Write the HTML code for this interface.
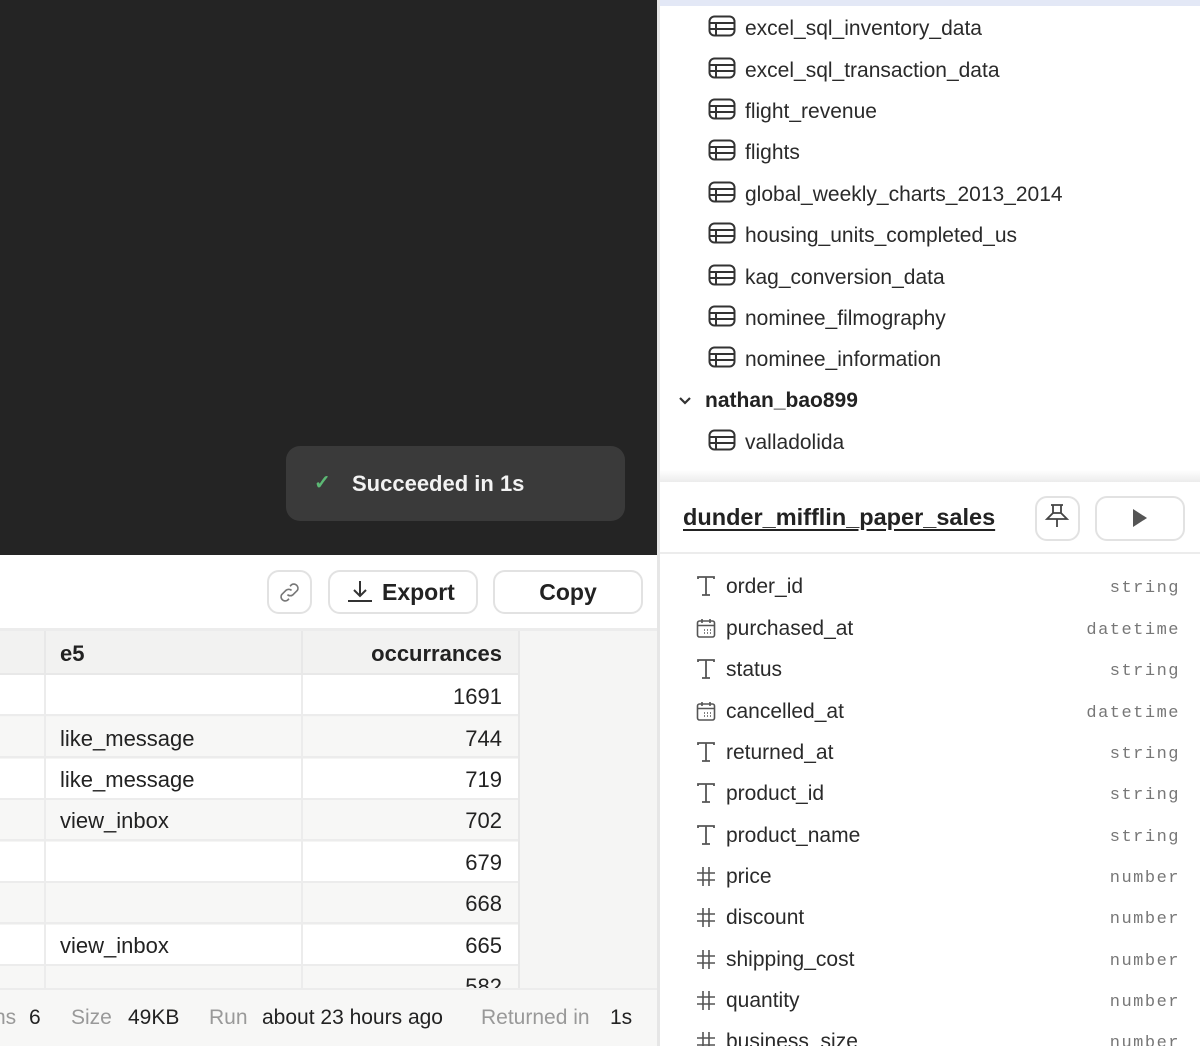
<!DOCTYPE html>
<html><head><meta charset="utf-8"><style>
*{margin:0;padding:0;box-sizing:border-box}
html,body{width:1200px;height:1046px;overflow:hidden}
body{position:relative;background:#fff;font-family:"Liberation Sans",sans-serif;color:#222}
.a{position:absolute}
.dark{left:0;top:0;width:657px;height:555px;background:#242424}
.toast{left:286px;top:446px;width:339px;height:75px;background:#3a3a3a;border-radius:14px;color:#f2f2f2;font-size:22px;font-weight:bold;line-height:75px;padding-left:66px}
.toast .ck{position:absolute;left:28px;top:0;color:#5cb874;font-size:20px}
.vdiv{left:657px;top:0;width:3px;height:1046px;background:#e6e6e6}
.tr{left:708px;height:24px;font-size:21px;line-height:24px;color:#2a2a2a;white-space:nowrap}
.tr svg{position:absolute;left:0;top:0}
.tr span{position:absolute;left:37px;top:2px}
.col{left:694px;font-size:21px;line-height:24px;color:#2a2a2a;width:486px;height:24px}
.col .nm{position:absolute;left:32px;top:1px}
.col .ty{position:absolute;right:0;top:3px;font-family:"Liberation Mono",monospace;font-size:17px;color:#777;letter-spacing:1.5px}
.col svg{position:absolute;left:2px;top:1px}
.btn{border:2px solid #e2e2e2;border-radius:12px;background:#fff}
.cell{position:absolute;font-size:22px;line-height:41px;color:#222}
</style></head><body>
<div class="a dark"></div>
<div class="a toast"><span class="ck">✓</span>Succeeded in 1s</div>

<div class="a" style="left:660px;top:0;width:540px;height:6px;background:#e3e8f6"></div>
<div class="a" style="left:660px;top:470px;width:540px;height:12px;background:linear-gradient(#fff,#ececec)"></div>

<div class="a vdiv"></div>

<div class="a" style="left:683px;top:504px;font-size:23.5px;font-weight:bold;color:#222;text-decoration:underline;text-underline-offset:4px">dunder_mifflin_paper_sales</div>
<div class="a btn" style="left:1035px;top:496px;width:45px;height:45px"></div>
<svg class="a" style="left:1044px;top:503px" width="26" height="30" viewBox="0 0 26 30" fill="none" stroke="#444" stroke-width="1.8"><path d="M7 2h12M9 2v8M17 2v8M3 16l6-6h8l6 6zM3 16h20M13 16v8"/></svg>
<div class="a btn" style="left:1095px;top:496px;width:90px;height:45px"></div>
<svg class="a" style="left:1131px;top:508px" width="18" height="20"><path d="M2 1L16 10L2 19Z" fill="#555"/></svg>
<div class="a" style="left:660px;top:552px;width:540px;height:2px;background:#ececec"></div>

<div class="a btn" style="left:267px;top:570px;width:45px;height:44px"></div>
<svg class="a" style="left:277px;top:580px" width="25" height="25" viewBox="0 0 24 24" fill="none" stroke="#777" stroke-width="1.6"><path d="M10 14a4 4 0 0 0 5.5 0l4-4a4 4 0 0 0-5.5-5.5l-1.5 1.5"/><path d="M14 10a4 4 0 0 0-5.5 0l-4 4a4 4 0 0 0 5.5 5.5l1.5-1.5"/></svg>
<div class="a btn" style="left:328px;top:570px;width:150px;height:44px"></div>
<svg class="a" style="left:347px;top:579px" width="26" height="24" fill="none" stroke="#333" stroke-width="2"><path d="M13 2v15M7 11l6 6 6-6M1 22h24"/></svg>
<div class="a" style="left:382px;top:579px;font-size:23px;font-weight:bold;color:#222">Export</div>
<div class="a btn" style="left:493px;top:570px;width:150px;height:44px"></div>
<div class="a" style="left:493px;top:579px;width:150px;text-align:center;font-size:23px;font-weight:bold;color:#222">Copy</div>

<div class="a" style="left:0;top:628px;width:657px;height:360px;background:#f5f5f4;overflow:hidden">
 <div class="a" style="left:0;top:0;width:657px;height:3px;background:#ececec"></div>
 <div class="a" style="left:0;top:3px;width:518px;height:44px;background:#f2f2f1;border-bottom:2px solid #e8e8e8"></div>
 <div class="a" style="left:44px;top:3px;width:2px;height:360px;background:#e8e8e8"></div>
 <div class="a" style="left:301px;top:3px;width:2px;height:360px;background:#e8e8e8"></div>
 <div class="a" style="left:518px;top:3px;width:2px;height:360px;background:#e8e8e8"></div>
 <div class="cell" style="left:60px;top:5px;font-weight:bold;font-size:22px">e5</div>
 <div class="cell" style="left:303px;top:5px;width:199px;text-align:right;font-weight:bold">occurrances</div>
 <div class="a" style="left:0;top:47px;width:518px;height:41px;background:#fff;border-bottom:2px solid #ececec"></div>
 <div class="a" style="left:0;top:89px;width:518px;height:41px;background:#f7f7f6;border-bottom:2px solid #ececec"></div>
 <div class="a" style="left:0;top:131px;width:518px;height:41px;background:#fff;border-bottom:2px solid #ececec"></div>
 <div class="a" style="left:0;top:172px;width:518px;height:41px;background:#f7f7f6;border-bottom:2px solid #ececec"></div>
 <div class="a" style="left:0;top:214px;width:518px;height:41px;background:#fff;border-bottom:2px solid #ececec"></div>
 <div class="a" style="left:0;top:255px;width:518px;height:41px;background:#f7f7f6;border-bottom:2px solid #ececec"></div>
 <div class="a" style="left:0;top:297px;width:518px;height:41px;background:#fff;border-bottom:2px solid #ececec"></div>
 <div class="a" style="left:0;top:338px;width:518px;height:41px;background:#f7f7f6"></div>
 <div class="a" style="left:44px;top:47px;width:2px;height:320px;background:#ececec"></div>
 <div class="a" style="left:301px;top:47px;width:2px;height:320px;background:#ececec"></div>
 <div class="cell" style="left:303px;top:48px;width:199px;text-align:right">1691</div>
 <div class="cell" style="left:60px;top:90px">like_message</div><div class="cell" style="left:303px;top:90px;width:199px;text-align:right">744</div>
 <div class="cell" style="left:60px;top:131px">like_message</div><div class="cell" style="left:303px;top:131px;width:199px;text-align:right">719</div>
 <div class="cell" style="left:60px;top:172px">view_inbox</div><div class="cell" style="left:303px;top:172px;width:199px;text-align:right">702</div>
 <div class="cell" style="left:303px;top:214px;width:199px;text-align:right">679</div>
 <div class="cell" style="left:303px;top:255px;width:199px;text-align:right">668</div>
 <div class="cell" style="left:60px;top:297px">view_inbox</div><div class="cell" style="left:303px;top:297px;width:199px;text-align:right">665</div>
 <div class="cell" style="left:303px;top:338px;width:199px;text-align:right">582</div>
</div>
<div class="a" style="left:0;top:988px;width:657px;height:58px;background:#f7f7f6;border-top:2px solid #ececec;font-size:21px;line-height:56px;white-space:nowrap">
 <span class="a" style="left:-6px;color:#999">ns</span><span class="a" style="left:29px">6</span>
 <span class="a" style="left:71px;color:#999">Size</span><span class="a" style="left:128px">49KB</span>
 <span class="a" style="left:209px;color:#999">Run</span><span class="a" style="left:262px">about 23 hours ago</span>
 <span class="a" style="left:481px;color:#999">Returned in</span><span class="a" style="left:610px">1s</span>
</div>

<div class="a tr" style="top:15px"><svg width="28" height="22" viewBox="0 0 28 22" fill="none" stroke="#333" stroke-width="2"><rect x="1.5" y="1.5" width="25" height="19" rx="5"/><path d="M1.5 8h25M1.5 14h25M8 8v12.5"/></svg><span>excel_sql_inventory_data</span></div>
<div class="a tr" style="top:57px"><svg width="28" height="22" viewBox="0 0 28 22" fill="none" stroke="#333" stroke-width="2"><rect x="1.5" y="1.5" width="25" height="19" rx="5"/><path d="M1.5 8h25M1.5 14h25M8 8v12.5"/></svg><span>excel_sql_transaction_data</span></div>
<div class="a tr" style="top:98px"><svg width="28" height="22" viewBox="0 0 28 22" fill="none" stroke="#333" stroke-width="2"><rect x="1.5" y="1.5" width="25" height="19" rx="5"/><path d="M1.5 8h25M1.5 14h25M8 8v12.5"/></svg><span>flight_revenue</span></div>
<div class="a tr" style="top:139px"><svg width="28" height="22" viewBox="0 0 28 22" fill="none" stroke="#333" stroke-width="2"><rect x="1.5" y="1.5" width="25" height="19" rx="5"/><path d="M1.5 8h25M1.5 14h25M8 8v12.5"/></svg><span>flights</span></div>
<div class="a tr" style="top:181px"><svg width="28" height="22" viewBox="0 0 28 22" fill="none" stroke="#333" stroke-width="2"><rect x="1.5" y="1.5" width="25" height="19" rx="5"/><path d="M1.5 8h25M1.5 14h25M8 8v12.5"/></svg><span>global_weekly_charts_2013_2014</span></div>
<div class="a tr" style="top:222px"><svg width="28" height="22" viewBox="0 0 28 22" fill="none" stroke="#333" stroke-width="2"><rect x="1.5" y="1.5" width="25" height="19" rx="5"/><path d="M1.5 8h25M1.5 14h25M8 8v12.5"/></svg><span>housing_units_completed_us</span></div>
<div class="a tr" style="top:264px"><svg width="28" height="22" viewBox="0 0 28 22" fill="none" stroke="#333" stroke-width="2"><rect x="1.5" y="1.5" width="25" height="19" rx="5"/><path d="M1.5 8h25M1.5 14h25M8 8v12.5"/></svg><span>kag_conversion_data</span></div>
<div class="a tr" style="top:305px"><svg width="28" height="22" viewBox="0 0 28 22" fill="none" stroke="#333" stroke-width="2"><rect x="1.5" y="1.5" width="25" height="19" rx="5"/><path d="M1.5 8h25M1.5 14h25M8 8v12.5"/></svg><span>nominee_filmography</span></div>
<div class="a tr" style="top:346px"><svg width="28" height="22" viewBox="0 0 28 22" fill="none" stroke="#333" stroke-width="2"><rect x="1.5" y="1.5" width="25" height="19" rx="5"/><path d="M1.5 8h25M1.5 14h25M8 8v12.5"/></svg><span>nominee_information</span></div>
<svg class="a" style="left:678px;top:396px" width="14" height="10"><path d="M2 2l5 5 5-5" fill="none" stroke="#333" stroke-width="2.2"/></svg>
<div class="a" style="left:705px;top:389px;font-size:21px;font-weight:bold;color:#222;line-height:24px">nathan_bao899</div>
<div class="a tr" style="top:429px"><svg width="28" height="22" viewBox="0 0 28 22" fill="none" stroke="#333" stroke-width="2"><rect x="1.5" y="1.5" width="25" height="19" rx="5"/><path d="M1.5 8h25M1.5 14h25M8 8v12.5"/></svg><span>valladolida</span></div>

<div class="a col" style="top:574px"><svg width="20" height="22" fill="none" stroke="#555" stroke-width="1.8"><path d="M2 4V2h16v2M10 2v18M6 20h8"/></svg><span class="nm">order_id</span><span class="ty">string</span></div>
<div class="a col" style="top:616px"><svg width="20" height="22" fill="none" stroke="#555" stroke-width="1.6"><rect x="1.5" y="4" width="17" height="16" rx="2"/><path d="M1.5 8.5h17M6 2v4M14 2v4"/><path d="M8 13h1M11 13h1M14 13h1M8 16h1M11 16h1M14 16h1" stroke-width="1.4"/></svg><span class="nm">purchased_at</span><span class="ty">datetime</span></div>
<div class="a col" style="top:657px"><svg width="20" height="22" fill="none" stroke="#555" stroke-width="1.8"><path d="M2 4V2h16v2M10 2v18M6 20h8"/></svg><span class="nm">status</span><span class="ty">string</span></div>
<div class="a col" style="top:699px"><svg width="20" height="22" fill="none" stroke="#555" stroke-width="1.6"><rect x="1.5" y="4" width="17" height="16" rx="2"/><path d="M1.5 8.5h17M6 2v4M14 2v4"/><path d="M8 13h1M11 13h1M14 13h1M8 16h1M11 16h1M14 16h1" stroke-width="1.4"/></svg><span class="nm">cancelled_at</span><span class="ty">datetime</span></div>
<div class="a col" style="top:740px"><svg width="20" height="22" fill="none" stroke="#555" stroke-width="1.8"><path d="M2 4V2h16v2M10 2v18M6 20h8"/></svg><span class="nm">returned_at</span><span class="ty">string</span></div>
<div class="a col" style="top:781px"><svg width="20" height="22" fill="none" stroke="#555" stroke-width="1.8"><path d="M2 4V2h16v2M10 2v18M6 20h8"/></svg><span class="nm">product_id</span><span class="ty">string</span></div>
<div class="a col" style="top:823px"><svg width="20" height="22" fill="none" stroke="#555" stroke-width="1.8"><path d="M2 4V2h16v2M10 2v18M6 20h8"/></svg><span class="nm">product_name</span><span class="ty">string</span></div>
<div class="a col" style="top:864px"><svg width="20" height="22" fill="none" stroke="#555" stroke-width="1.6"><path d="M7 2v19M13 2v19M1 8h18M1 15h18"/></svg><span class="nm">price</span><span class="ty">number</span></div>
<div class="a col" style="top:905px"><svg width="20" height="22" fill="none" stroke="#555" stroke-width="1.6"><path d="M7 2v19M13 2v19M1 8h18M1 15h18"/></svg><span class="nm">discount</span><span class="ty">number</span></div>
<div class="a col" style="top:947px"><svg width="20" height="22" fill="none" stroke="#555" stroke-width="1.6"><path d="M7 2v19M13 2v19M1 8h18M1 15h18"/></svg><span class="nm">shipping_cost</span><span class="ty">number</span></div>
<div class="a col" style="top:988px"><svg width="20" height="22" fill="none" stroke="#555" stroke-width="1.6"><path d="M7 2v19M13 2v19M1 8h18M1 15h18"/></svg><span class="nm">quantity</span><span class="ty">number</span></div>
<div class="a col" style="top:1029px"><svg width="20" height="22" fill="none" stroke="#555" stroke-width="1.6"><path d="M7 2v19M13 2v19M1 8h18M1 15h18"/></svg><span class="nm">business_size</span><span class="ty">number</span></div>
</body></html>
